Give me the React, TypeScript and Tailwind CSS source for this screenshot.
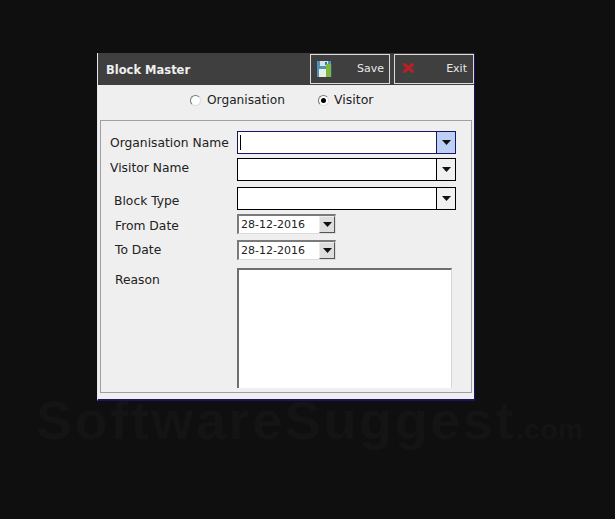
import React from 'react';

const font = "font-['DejaVu_Sans','Liberation_Sans',sans-serif]";

const Arrow = () => (
  <svg width="9" height="5" viewBox="0 0 9 5">
    <path d="M0 0h9L4.5 5z" fill="#111" />
  </svg>
);

const SaveIcon = () => (
  <svg width="15" height="16" viewBox="0 0 15 16">
    <rect x="0" y="0" width="14" height="16" fill="#4f93b8" />
    <rect x="3" y="0" width="8" height="5" fill="#d5e4ea" />
    <rect x="8" y="1" width="2" height="3" fill="#3d6f8c" />
    <rect x="2" y="8" width="9" height="8" fill="#e6f0e4" />
    <rect x="9" y="3" width="5" height="13" fill="#7fb53c" />
    <rect x="14" y="3" width="1" height="13" fill="#2f5f6f" />
  </svg>
);

const ExitIcon = () => (
  <svg width="13" height="15" viewBox="0 0 13 15">
    <path d="M2 13.5h9" stroke="#1f5a3c" strokeWidth="1.5" opacity="0.7" />
    <path d="M2.5 2.5l8 7M10.5 2.5l-8 7" stroke="#b81f26" strokeWidth="3.2" strokeLinecap="round" />
  </svg>
);

const Combo = ({ active = false }: { active?: boolean }) => (
  <div className={`flex h-[23px] w-[219px] border bg-white ${active ? 'border-[#1b1464]' : 'border-black'}`}>
    <div className="flex flex-1 items-center pl-[2px]">
      {active && <div className="h-[15px] w-px bg-black" />}
    </div>
    <div className={`flex w-[19px] items-center justify-center border-l ${active ? 'border-[#1b1464] bg-[#bcd0f5]' : 'border-black bg-[#f1f1f1]'}`}>
      <Arrow />
    </div>
  </div>
);

const DateBox = ({ value }: { value: string }) => (
  <div className="flex h-[20px] w-[99px] items-center border-b border-l-2 border-r border-t-2 border-b-[#dcdcdc] border-l-[#7a7a7a] border-r-[#dcdcdc] border-t-[#7a7a7a] bg-white">
    <span className="flex-1 pl-[2px] text-[11px] leading-none text-[#222]">{value}</span>
    <div className="flex h-[17px] w-[16px] items-center justify-center border border-b-[#555] border-l-[#eee] border-r-[#555] border-t-[#eee] bg-[#dedede]">
      <Arrow />
    </div>
  </div>
);

const Radio = ({ checked = false }: { checked?: boolean }) => (
  <div className="flex h-[11px] w-[11px] items-center justify-center rounded-full border border-b-[#ddd] border-l-[#777] border-r-[#ddd] border-t-[#777] bg-white">
    {checked && <div className="h-[5px] w-[5px] rounded-full bg-black" />}
  </div>
);

export default function App() {
  return (
    <div className={`relative h-[519px] w-[615px] overflow-hidden bg-[#0f0f10] pl-[97px] pt-[53px] ${font}`}>
      {/* faint watermark behind the window */}
      <div className="absolute left-[36px] top-[392px] whitespace-nowrap font-['Liberation_Sans',sans-serif] text-[54px] font-bold leading-[56px] tracking-[2.6px] text-[#141414]">
        SoftwareSuggest<span className="text-[28px] tracking-[0.5px]">.com</span>
      </div>

      <div className="relative flex h-[348px] w-[378px] flex-col border-b-2 border-l border-r border-b-[#1b1464] border-l-[#e6e6f0] border-r-[#1b1464] bg-[#efefef]">
        <div className="flex h-[32px] items-center bg-[#3f3f3f] pl-[8px]">
          <span className="flex-1 pt-[3px] text-[11.5px] font-bold text-[#efefef]">Block Master</span>
          <div className="mr-[4px] flex h-[30px] w-[80px] items-center justify-between border border-[#dcdcdc] pl-[6px] pr-[5px] text-[11px] text-[#e8e8e8]">
            <SaveIcon />
            <span className="pt-px">Save</span>
          </div>
          <div className="flex h-[30px] w-[80px] items-center justify-between border border-[#dcdcdc] pl-[7px] pr-[6px] text-[11px] text-[#e8e8e8]">
            <ExitIcon />
            <span className="pt-px">Exit</span>
          </div>
        </div>

        <div className="flex h-[35px] items-center pb-[5px] pl-[92px] text-[12.2px] text-[#222]">
          <Radio />
          <span className="ml-[6px] w-[111px]">Organisation</span>
          <Radio checked />
          <span className="ml-[5px] text-[12.5px]">Visitor</span>
        </div>

        <div className="ml-[2px] mr-[2px] h-[273px] border border-[#a0a0a0] pl-[9px] pt-[10px] text-[12.3px] text-[#222]">
          <div className="flex h-[23px]">
            <span className="w-[127px] pt-[3px]">Organisation Name</span>
            <Combo active />
          </div>
          <div className="mt-[4px] flex h-[23px]">
            <span className="w-[127px] mt-px">Visitor Name</span>
            <Combo />
          </div>
          <div className="mt-[6px] flex h-[23px]">
            <span className="w-[127px] pl-[4px] pt-[5px]">Block Type</span>
            <Combo />
          </div>
          <div className="mt-[4px] flex h-[20px]">
            <span className="w-[127px] pl-[5px] pt-[3px]">From Date</span>
            <DateBox value="28-12-2016" />
          </div>
          <div className="mt-[6px] flex h-[20px]">
            <span className="w-[127px] pl-[5px] mt-px">To Date</span>
            <DateBox value="28-12-2016" />
          </div>
          <div className="mt-[8px] flex h-[120px]">
            <span className="w-[127px] pl-[5px] pt-[3px]">Reason</span>
            <div className="h-[120px] w-[215px] border-l-2 border-r border-t-2 border-l-[#6e6e6e] border-r-[#d8d8d8] border-t-[#6e6e6e] bg-white" />
          </div>
        </div>
      </div>
    </div>
  );
}
